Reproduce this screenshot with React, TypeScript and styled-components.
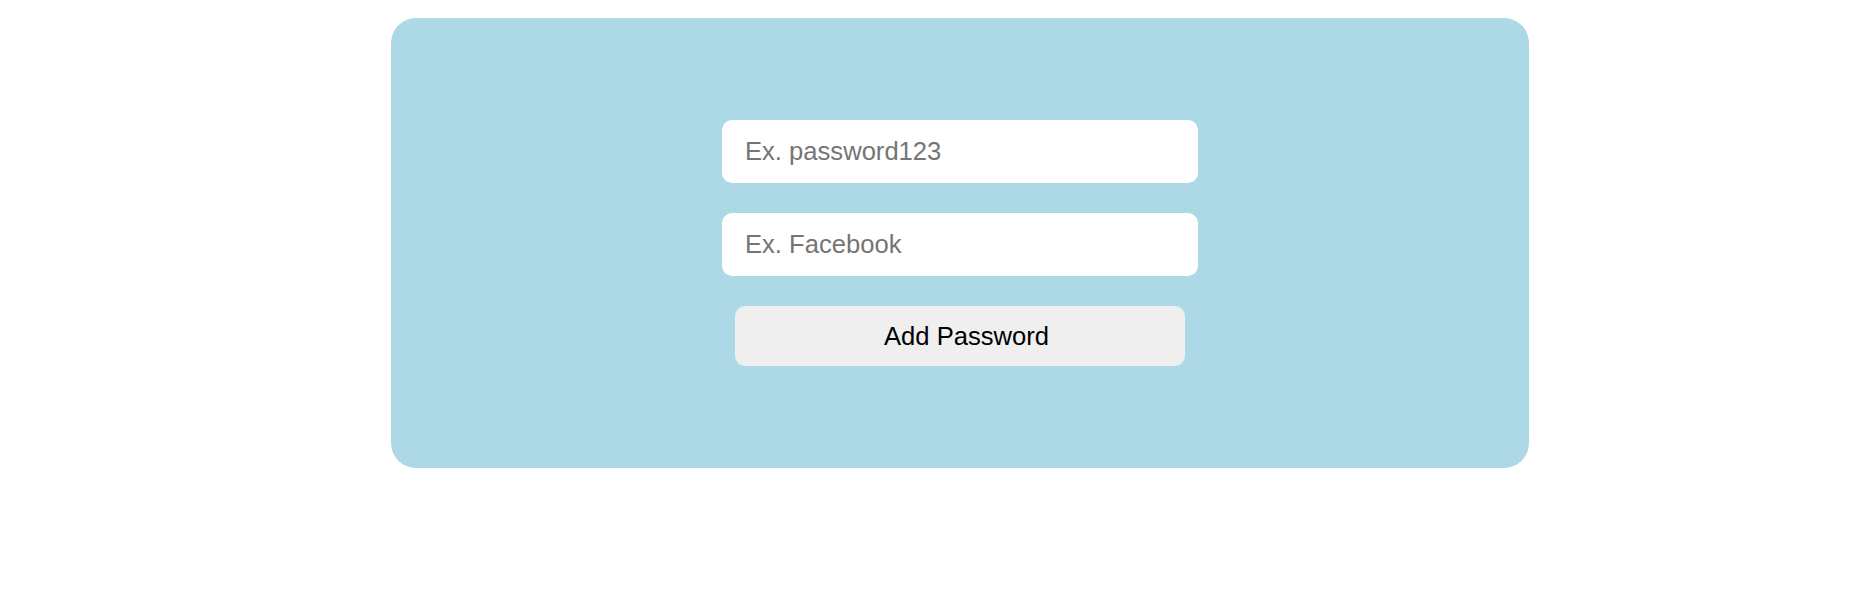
import React, { useState } from 'react';
import styled, { createGlobalStyle } from 'styled-components';

const GlobalStyle = createGlobalStyle`
  body {
    margin: 0;
    background: #ffffff;
    font-family: "Liberation Sans", Arial, sans-serif;
  }
`;

const Page = styled.div`
  padding: 18px 0 0 391px;
`;

const Card = styled.form`
  width: 1138px;
  height: 450px;
  box-sizing: border-box;
  background-color: lightblue;
  border-radius: 25px;
  display: flex;
  flex-direction: column;
  align-items: center;
  justify-content: center;
  gap: 30px;
`;

const Field = styled.input`
  width: 476px;
  height: 63px;
  box-sizing: border-box;
  padding: 0 23px;
  border: none;
  border-radius: 10px;
  background: #ffffff;
  font-family: "Liberation Sans", Arial, sans-serif;
  font-size: 25.6px;
  color: #000;
  outline: none;

  &::placeholder {
    color: #757575;
  }
`;

const SubmitButton = styled.button`
  width: 450px;
  height: 60px;
  padding: 0 0 0 13px;
  border: none;
  border-radius: 10px;
  background-color: #efefef;
  color: #000;
  font-family: "Liberation Sans", Arial, sans-serif;
  font-size: 25.6px;
  cursor: pointer;
`;

export default function App() {
  const [password, setPassword] = useState('');
  const [site, setSite] = useState('');

  const handleSubmit = (e: React.FormEvent) => {
    e.preventDefault();
  };

  return (
    <>
      <GlobalStyle />
      <Page>
        <Card onSubmit={handleSubmit}>
          <Field
            type="text"
            placeholder="Ex. password123"
            value={password}
            onChange={(e) => setPassword(e.target.value)}
          />
          <Field
            type="text"
            placeholder="Ex. Facebook"
            value={site}
            onChange={(e) => setSite(e.target.value)}
          />
          <SubmitButton type="submit">Add Password</SubmitButton>
        </Card>
      </Page>
    </>
  );
}
